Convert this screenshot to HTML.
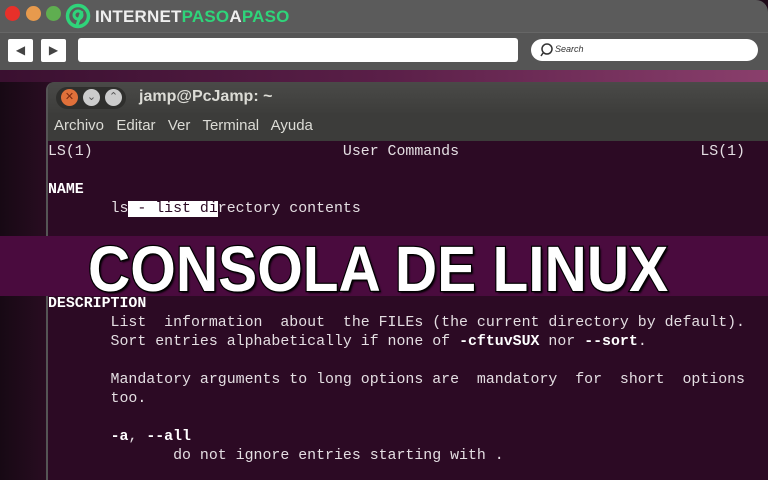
<!DOCTYPE html>
<html><head><meta charset="utf-8"><style>
*{margin:0;padding:0;box-sizing:border-box}
body{width:768px;height:480px;overflow:hidden;position:relative;background:#1f0b19;font-family:"Liberation Sans",sans-serif}
.abs{position:absolute}
#top{left:0;top:0;width:768px;height:32px;background:#5b5b5b;border-top-right-radius:12px}
#tool{left:0;top:32px;width:768px;height:38px;background:#555;border-top:1px solid #666}
.dot{width:15px;height:15px;border-radius:50%;top:6px}
.btn{top:39px;width:25px;height:23px;background:#fff;border-radius:2px;font-size:12px;color:#444;text-align:center;line-height:23px}
#strip{left:0;top:70px;width:768px;height:12px;background:linear-gradient(90deg,#3a1030,#5a1f48 50%,#8a3f6c)}
#desk{left:0;top:82px;width:768px;height:398px;background:linear-gradient(90deg,#170914,#2a0d22 50px)}
#win{left:46px;top:82px;width:722px;height:398px;background:#2c0a24;border-left:2px solid #555;border-top-left-radius:8px;overflow:hidden}
#title{left:0;top:0;width:722px;height:31px;background:linear-gradient(#4a4a48,#3d3d3b)}
#menu{left:0;top:31px;width:722px;height:28px;background:#3c3c3a;color:#dcdcd6;font-size:15px;padding:4px 0 0 6px;word-spacing:2px}
.wb{width:17px;height:17px;border-radius:50%;top:7px;font-size:11px;text-align:center;line-height:17px;color:#555}
pre{font-family:"Liberation Mono",monospace;font-size:14.9px;line-height:19px;color:#e4dee2;position:absolute;left:0px;top:61px}
b{color:#fff}
#ban{left:0;top:236px;width:768px;height:60px;background:#4a0b3e}
#bt{left:88px;top:232px;width:660px;white-space:nowrap;font-size:64px;font-weight:bold;color:#fff;-webkit-text-stroke:2.5px #000;paint-order:stroke fill;text-shadow:2px 2px 2px #000;font-family:"Liberation Sans",sans-serif;transform:scaleX(0.915);transform-origin:0 0}
</style></head><body>
<div id="desk" class="abs"></div>
<div id="top" class="abs"></div>
<div class="abs dot" style="left:5px;background:#e8302a"></div>
<div class="abs dot" style="left:26px;background:#e79a4d"></div>
<div class="abs dot" style="left:46px;background:#5fae50"></div>
<svg class="abs" style="left:65px;top:3px" width="26" height="26" viewBox="0 0 26 26"><circle cx="13" cy="13" r="10.5" fill="none" stroke="#2fd47a" stroke-width="3.5"/><circle cx="13" cy="12" r="4" fill="none" stroke="#2fd47a" stroke-width="3"/><path d="M17 8 L12 22" stroke="#2fd47a" stroke-width="3"/></svg>
<div class="abs" style="left:95px;top:7px;font-size:17px;font-weight:bold;color:#eee;letter-spacing:0.2px">INTERNET<span style="color:#2fd47a">PASO</span>A<span style="color:#2fd47a">PASO</span></div>
<div id="tool" class="abs"></div>
<div class="abs btn" style="left:8px">◀</div>
<div class="abs btn" style="left:41px">▶</div>
<div class="abs" style="left:78px;top:38px;width:440px;height:24px;background:#fff;border-radius:3px"></div>
<div class="abs" style="left:531px;top:39px;width:227px;height:22px;background:#fff;border-radius:11px"></div>
<svg class="abs" style="left:539px;top:42px" width="14" height="16" viewBox="0 0 14 16"><circle cx="8" cy="7" r="5" fill="none" stroke="#333" stroke-width="1.5"/><path d="M4 11 L2 14" stroke="#333" stroke-width="1.5"/></svg>
<div class="abs" style="left:555px;top:44px;font-size:9px;font-style:italic;color:#333">Search</div>
<div id="strip" class="abs"></div>
<div id="win" class="abs">
 <div id="title" class="abs"></div>
 <div class="abs" style="left:8px;top:5px;width:70px;height:22px;border-radius:11px;background:#2f2f2d"></div>
 <div class="abs wb" style="left:13px;background:#e0703a;color:#7a2a10">✕</div>
 <div class="abs wb" style="left:35px;background:#ccc">⌄</div>
 <div class="abs wb" style="left:57px;background:#ccc">⌃</div>
 <div class="abs" style="left:91px;top:6px;font-size:16px;font-weight:bold;color:#dcdcd6">jamp@PcJamp: ~</div>
 <div id="menu" class="abs">Archivo&nbsp; Editar&nbsp; Ver&nbsp; Terminal&nbsp; Ayuda</div>
<pre>LS(1)                            User Commands                           LS(1)

<b>NAME</b>
       ls<span style="background:#fff;color:#2c0a24"> - list di</span>rectory contents




<b>DESCRIPTION</b>
       List  information  about  the FILEs (the current directory by default).
       Sort entries alphabetically if none of <b>-cftuvSUX</b> nor <b>--sort</b>.

       Mandatory arguments to long options are  mandatory  for  short  options
       too.

       <b>-a</b>, <b>--all</b>
              do not ignore entries starting with .</pre>
</div>
<div id="ban" class="abs"></div>
<div id="bt" class="abs">CONSOLA DE LINUX</div>
</body></html>
